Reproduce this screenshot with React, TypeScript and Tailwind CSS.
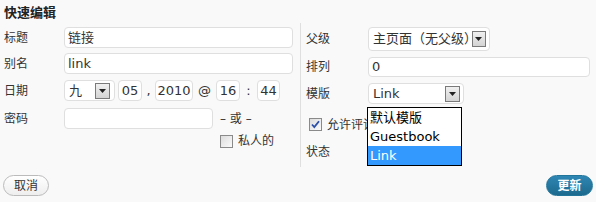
const font = "font-['DejaVu_Sans','Noto_Sans_CJK_SC',sans-serif]";

function Arrow() {
  return (
    <span className="flex items-center justify-center w-[15px] h-[16px] border border-[#7a7a7a] bg-gradient-to-b from-[#f0f0f0] to-[#d4d4d4]">
      <svg width="7" height="4" viewBox="0 0 7 4">
        <path d="M0 0h7L3.5 4z" fill="#222" />
      </svg>
    </span>
  );
}

function Box({ className = "", children }: { className?: string; children?: React.ReactNode }) {
  return (
    <div className={`flex items-center bg-white border border-[#dfdfdf] rounded-[4px] text-[13px] text-[#333] ${className}`}>
      {children}
    </div>
  );
}

function Check({ checked }: { checked?: boolean }) {
  return (
    <span className="relative inline-block w-[13px] h-[13px] border border-[#8a8a8a] bg-gradient-to-br from-[#dcdcdc] to-[#fbfbfb]">
      {checked && (
        <svg className="absolute left-[1px] top-[1px]" width="9" height="9" viewBox="0 0 9 9">
          <path d="M1 4.5l2.3 2.5L8 1.2" stroke="#2a4fa8" strokeWidth="1.8" fill="none" />
        </svg>
      )}
    </span>
  );
}

export default function App() {
  return (
    <div className={`relative w-[596px] h-[202px] bg-[#f9f9f9] overflow-hidden text-[#333] ${font}`}>
      <div className="h-[23px] pl-[4px] pt-[5px] text-[13px] leading-[16px] font-bold text-[#222]">快速编辑</div>

      <div className="flex">
        {/* left */}
        <div className="w-[300px] pl-[4px] pt-[4px] text-[12px]">
          <div className="flex items-center h-[21px]">
            <span className="w-[60px]">标题</span>
            <Box className="w-[229px] h-[21px] pl-[3px]">链接</Box>
          </div>
          <div className="flex items-center h-[21px] mt-[5px]">
            <span className="w-[60px]">别名</span>
            <Box className="w-[229px] h-[21px] pl-[3px]">link</Box>
          </div>
          <div className="flex items-center h-[21px] mt-[6px]">
            <span className="w-[60px]">日期</span>
            <Box className="w-[51px] h-[21px] pl-[4px] pr-[4px] justify-between">
              <span>九</span>
              <Arrow />
            </Box>
            <Box className="w-[24px] h-[21px] ml-[3px] justify-center">05</Box>
            <span className="w-[13px] text-center text-[13px]">,</span>
            <Box className="w-[38px] h-[21px] justify-center">2010</Box>
            <span className="w-[23px] text-center text-[13px]">@</span>
            <Box className="w-[24px] h-[21px] justify-center">16</Box>
            <span className="w-[17px] text-center text-[13px]">:</span>
            <Box className="w-[23px] h-[21px] justify-center">44</Box>
          </div>
          <div className="flex items-start mt-[7px]">
            <span className="w-[60px] h-[21px] flex items-center">密码</span>
            <Box className="w-[149px] h-[21px]" />
            <div className="ml-[7px] flex flex-col">
              <span className="h-[21px] flex items-center">– 或 –</span>
              <span className="flex items-center gap-[5px] mt-[3px]">
                <Check />
                <span>私人的</span>
              </span>
            </div>
          </div>
        </div>

        {/* right */}
        <div className="w-[296px] h-[144px] border-l border-[#dfdfdf] pl-[5px] pt-[4px] text-[12px]">
          <div className="flex items-center h-[24px]">
            <span className="w-[62px]">父级</span>
            <Box className="w-[122px] h-[24px] pl-[4px] pr-[3px] justify-between">
              <span>主页面（无父级）</span>
              <Arrow />
            </Box>
          </div>
          <div className="flex items-center h-[20px] mt-[6px]">
            <span className="w-[62px]">排列</span>
            <Box className="w-[222px] h-[20px] pl-[3px]">0</Box>
          </div>
          <div className="flex items-center h-[21px] mt-[6px]">
            <span className="w-[62px]">模版</span>
            <Box className="w-[96px] h-[21px] pl-[4px] pr-[3px] justify-between">
              <span>Link</span>
              <Arrow />
            </Box>
          </div>
          <div className="flex items-center h-[13px] mt-[14px] pl-[3px] gap-[5px]">
            <Check checked />
            <span>允许评论</span>
          </div>
          <div className="flex items-center h-[22px] mt-[10px]">
            <span className="w-[62px]">状态</span>
          </div>
        </div>
      </div>

      <div className="flex justify-between items-center mt-[8px] pl-[3px] pr-[3px]">
        <button className="w-[46px] h-[21px] rounded-full border border-[#bbb] bg-gradient-to-b from-white to-[#eee] text-[12px] text-[#333]">
          取消
        </button>
        <button className="w-[47px] h-[21px] rounded-full border border-[#21759b] bg-gradient-to-b from-[#2e86b3] to-[#1d6a8e] text-[12px] font-bold text-white">
          更新
        </button>
      </div>

      {/* open dropdown */}
      <div className="absolute left-[367px] top-[107px] w-[95px] border border-black bg-white text-[13px] text-black leading-[19px]">
        <div className="h-[19px] pl-[2px]">默认模版</div>
        <div className="h-[19px] pl-[2px]">Guestbook</div>
        <div className="h-[19px] pl-[2px] bg-[#3399ff] text-white">Link</div>
      </div>
    </div>
  );
}
